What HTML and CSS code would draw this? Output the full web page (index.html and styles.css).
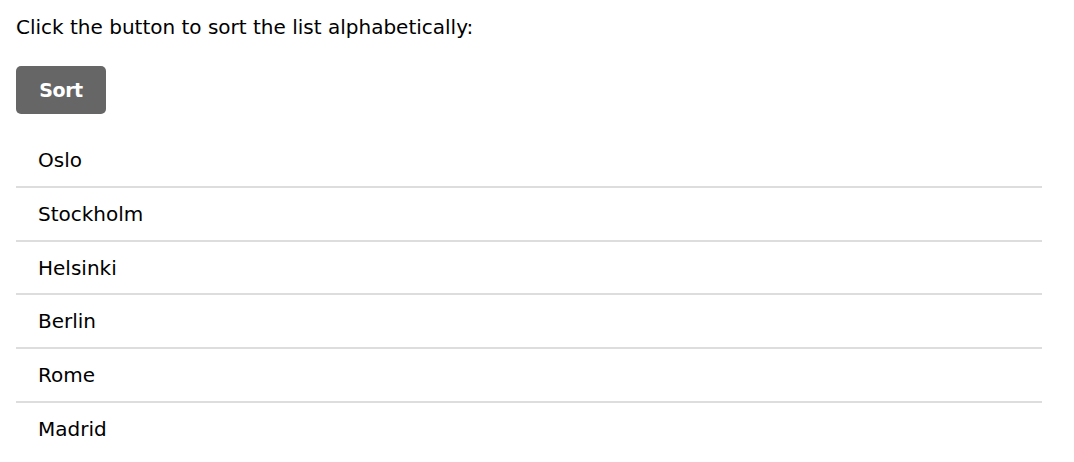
FILE: index.html
```html
<!DOCTYPE html>
<html lang="en">
<head>
    <meta charset="UTF-8">
    <title>Sort a list</title>
    <link rel="stylesheet" href="styles.css">
</head>
<body>
    <p class="intro">Click the button to sort the list alphabetically:</p>
    <button class="sort-btn" onclick="sortList()">Sort</button>
    <ul class="city-list" id="cityList">
        <li>Oslo</li>
        <li>Stockholm</li>
        <li>Helsinki</li>
        <li>Berlin</li>
        <li>Rome</li>
        <li>Madrid</li>
    </ul>

    <script>
        function sortList() {
            const list = document.getElementById('cityList');
            const items = Array.from(list.children);
            items.sort((a, b) => a.textContent.localeCompare(b.textContent));
            items.forEach(li => list.appendChild(li)); // re-append in order
        }
    </script>
</body>
</html>
```

FILE: styles.css
```css
body {
    font-family: 'DejaVu Sans', Verdana, sans-serif;
    font-size: 20px;
    color: #000;
    margin: 0;
    padding: 0 32px 0 16px;
    background: #fff;
}
.intro {
    margin: 16px 0 28px;
    line-height: 22px;
}
.sort-btn {
    display: block;
    width: 90px;
    height: 48px;
    background-color: #666;
    color: #fff;
    font-family: inherit;
    font-size: 19px;
    font-weight: bold;
    letter-spacing: -0.4px;
    border: none;
    border-radius: 5px;
    cursor: pointer;
}
.city-list {
    list-style: none;
    margin: 20px 0 0;
    padding: 0;
}
.city-list li {
    padding: 15px 22px 14.75px;
    line-height: 22px;
    border-bottom: 2px solid #ddd;
}
.city-list li:last-child {
    border-bottom: none;
}
```
